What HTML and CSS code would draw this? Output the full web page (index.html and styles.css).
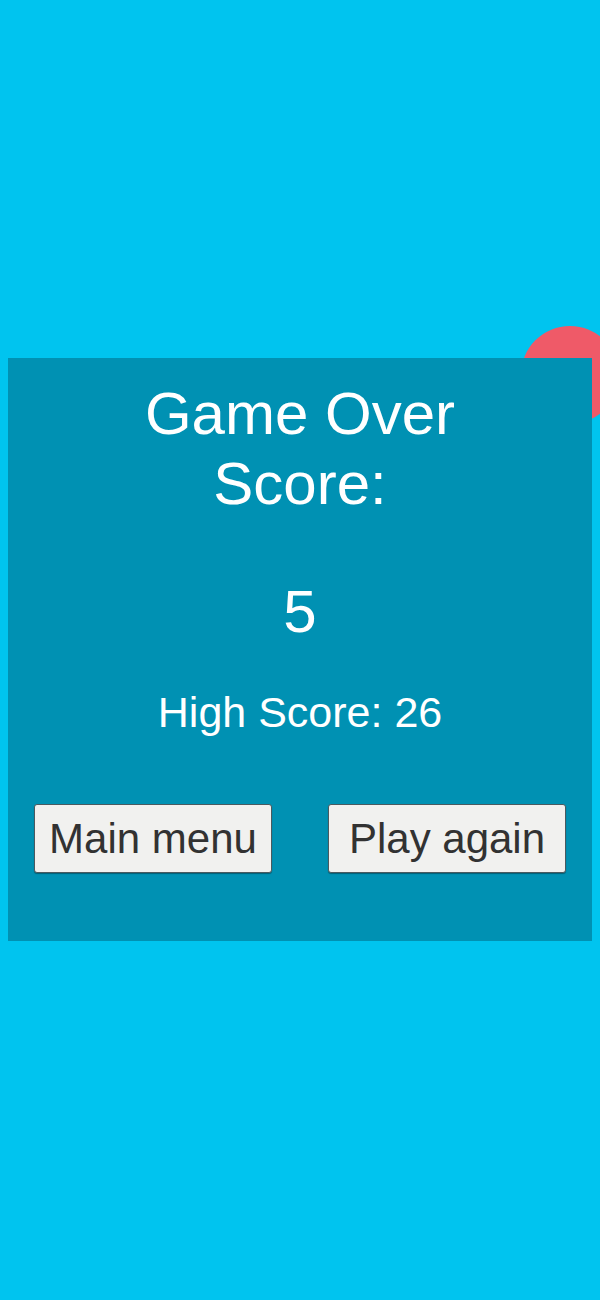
FILE: index.html
```html
<!DOCTYPE html>
<html>
<head>
<meta charset="utf-8">
<link rel="stylesheet" href="styles.css">
</head>
<body>
<div class="screen">
  <div class="ball"></div>
  <div class="panel">
    <div class="title">Game Over<br>Score:</div>
    <div class="score">5</div>
    <div class="high">High Score: 26</div>
    <div class="buttons">
      <button class="btn">Main menu</button>
      <button class="btn">Play again</button>
    </div>
  </div>
</div>
</body>
</html>
```
FILE: styles.css
```css
html, body {
  margin: 0;
  padding: 0;
}
body {
  background: #00c4ef;
  font-family: "Liberation Sans", Arial, sans-serif;
}
.screen {
  position: relative;
  width: 600px;
  height: 1300px;
  overflow: hidden;
  padding-top: 358px;
  box-sizing: border-box;
}
.ball {
  position: absolute;
  left: 521px;
  top: 326px;
  width: 98px;
  height: 98px;
  border-radius: 50%;
  background: #ef5a68;
}
.panel {
  position: relative;
  margin: 0 8px;
  background: #0091b3;
  padding: 21px 26px 68px;
  color: #ffffff;
  text-align: center;
}
.title {
  font-size: 60px;
  line-height: 70px;
}
.score {
  margin-top: 58px;
  font-size: 60px;
  line-height: 70px;
}
.high {
  margin-top: 40px;
  font-size: 43px;
  line-height: 50px;
}
.buttons {
  margin-top: 67px;
  display: flex;
  justify-content: space-between;
}
.btn {
  width: 238px;
  height: 69px;
  margin: 0;
  padding: 0;
  background: #f1f1ef;
  border: 1px solid #4a5a60;
  border-radius: 3px;
  box-shadow: 0 1px 1px rgba(0, 0, 0, 0.35);
  color: #323232;
  font-family: "Liberation Sans", Arial, sans-serif;
  font-size: 42px;
  line-height: 67px;
}
```
